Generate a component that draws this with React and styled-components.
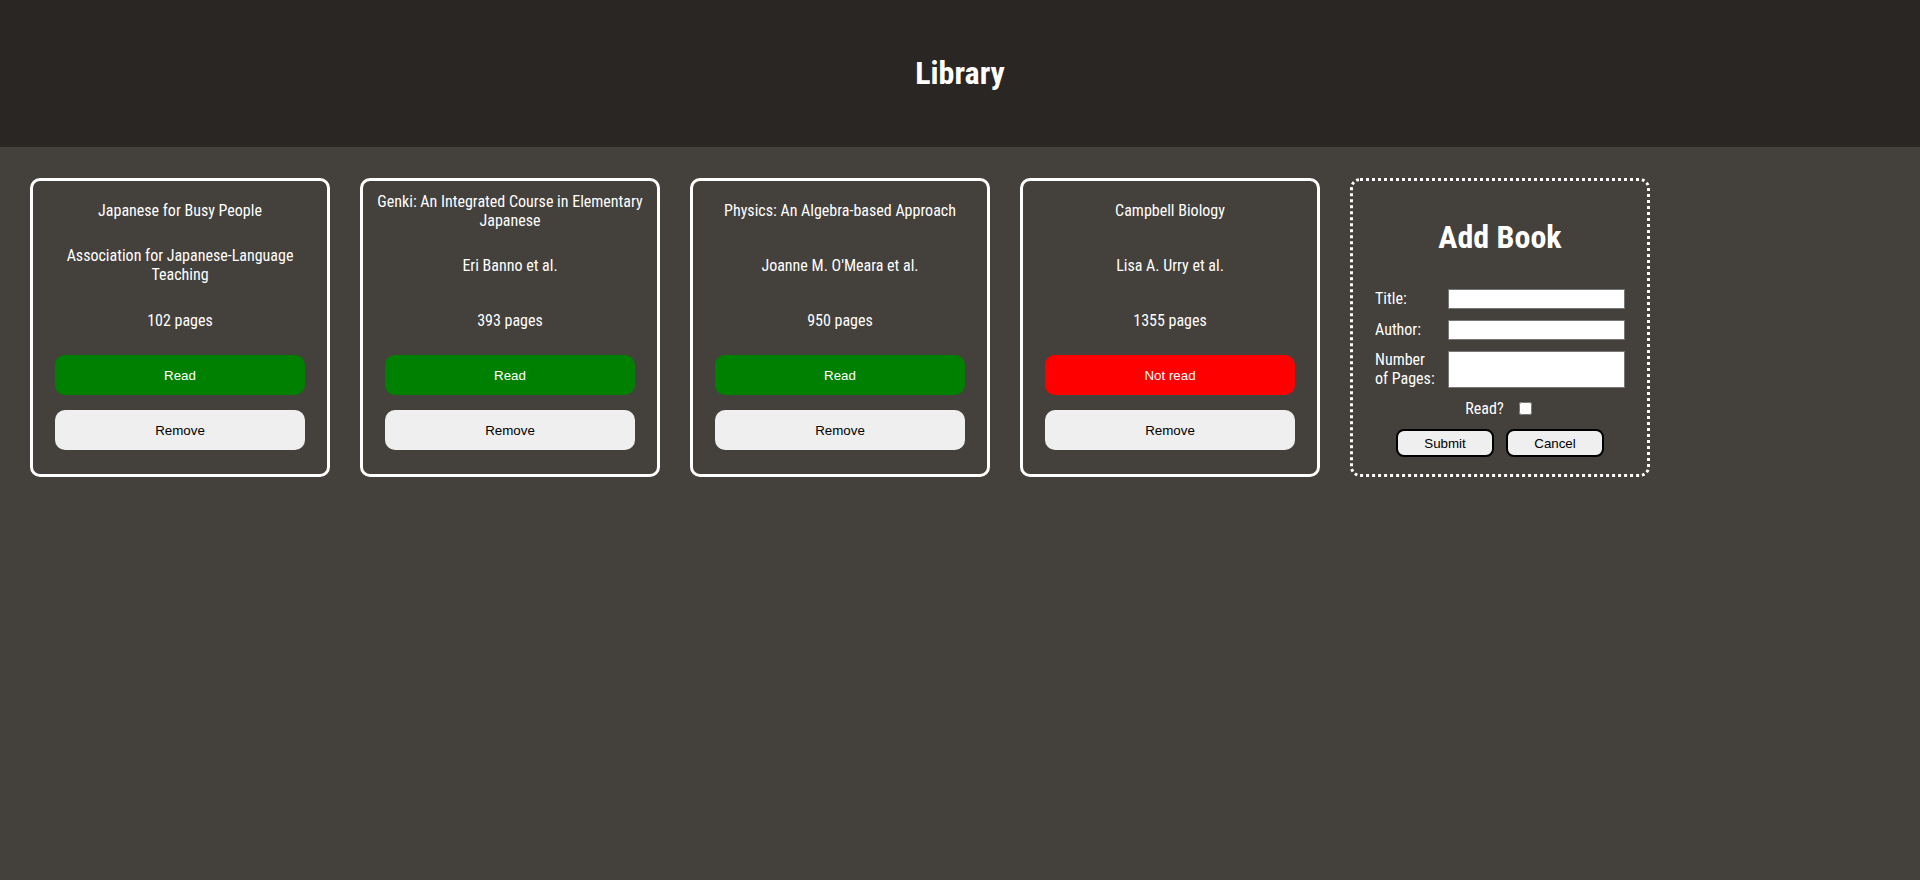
import React from "react";
import styled, { createGlobalStyle } from "styled-components";

const condensed = `"Roboto Condensed", "Liberation Sans Narrow", "Arial Narrow", Roboto, sans-serif`;
const buttonFont = `"Liberation Sans", Arial, sans-serif`;

const GlobalStyle = createGlobalStyle`
	* { box-sizing: border-box; }
	body {
		margin: 0;
		background: #44403b;
		color: #ffffff;
		font-family: ${condensed};
	}
	#root { min-height: 100vh; }
`;

const Header = styled.header`
	height: 147px;
	background: #2a2624;
	display: flex;
	align-items: center;
	justify-content: center;
`;

const Title = styled.h1`
	margin: 0;
	font-size: 32px;
	font-weight: 700;
	line-height: 37px;
`;

const Shelf = styled.main`
	display: flex;
	flex-wrap: wrap;
	align-items: flex-start;
	gap: 30px;
	padding: 31px 30px 30px;
`;

const Card = styled.div`
	width: 300px;
	height: 299px;
	border: 3px solid #ffffff;
	border-radius: 10px;
	padding: 10px 10px 24px;
	display: grid;
	grid-template-rows: repeat(3, 1fr) 40px 40px;
	row-gap: 15px;
	justify-items: center;
`;

const Field = styled.p`
	margin: 0;
	display: flex;
	align-items: center;
	justify-content: center;
	text-align: center;
	font-size: 16px;
	line-height: 19px;
`;

const tones = {
	read: { bg: "#008000", fg: "#ffffff" },
	unread: { bg: "#ff0000", fg: "#ffffff" },
	plain: { bg: "#efefef", fg: "#000000" },
};

const CardButton = styled.button`
	width: 250px;
	height: 40px;
	border: none;
	border-radius: 10px;
	background: ${(p) => tones[p.$tone].bg};
	color: ${(p) => tones[p.$tone].fg};
	font-family: ${buttonFont};
	font-size: 13.33px;
	cursor: pointer;
`;

const AddCard = styled.div`
	width: 300px;
	height: 299px;
	border: 3px dotted #ffffff;
	border-radius: 10px;
	padding: 38px 22px 16px;
	display: flex;
	flex-direction: column;
`;

const AddTitle = styled.h2`
	margin: 0 0 33px;
	text-align: center;
	font-size: 32px;
	font-weight: 700;
	line-height: 37px;
`;

const Form = styled.form`
	display: grid;
	grid-template-columns: 60px 1fr;
	column-gap: 13px;
	row-gap: 11px;
`;

const Label = styled.label`
	font-size: 16px;
	line-height: 18.5px;
	align-self: center;
`;

const TextInput = styled.input`
	width: 100%;
	height: ${(p) => (p.$tall ? "37px" : "20px")};
	border: 1px solid #767676;
	background: #ffffff;
	padding: 1px 2px;
`;

const CheckRow = styled.div`
	grid-column: 1 / -1;
	display: flex;
	align-items: center;
	justify-content: center;
	font-size: 16px;
	line-height: 19px;
`;

const CheckLabel = styled.label`
	margin-right: 11px;
`;

const Check = styled.input`
	width: 13px;
	height: 13px;
	margin: 3px 3px 3px 4px;
`;

const Actions = styled.div`
	grid-column: 1 / -1;
	display: flex;
	justify-content: center;
	gap: 12px;
`;

const FormButton = styled.button`
	width: 98px;
	height: 28px;
	border: 2px solid #000000;
	border-radius: 8px;
	background: #efefef;
	color: #000000;
	font-family: ${buttonFont};
	font-size: 13.33px;
	cursor: pointer;
`;

const books = [
	{ title: "Japanese for Busy People", author: "Association for Japanese-Language Teaching", pages: 102, read: true },
	{ title: "Genki: An Integrated Course in Elementary Japanese", author: "Eri Banno et al.", pages: 393, read: true },
	{ title: "Physics: An Algebra-based Approach", author: "Joanne M. O'Meara et al.", pages: 950, read: true },
	{ title: "Campbell Biology", author: "Lisa A. Urry et al.", pages: 1355, read: false },
];

export default function App() {
	const [library, setLibrary] = React.useState(books);

	const toggle = (i) =>
		setLibrary((state) => state.map((b, j) => (j === i ? { ...b, read: !b.read } : b)));
	const remove = (i) => setLibrary((state) => state.filter((_, j) => j !== i));

	return (
		<>
			<GlobalStyle />
			<Header>
				<Title>Library</Title>
			</Header>
			<Shelf>
				{library.map((book, i) => (
					<Card key={book.title}>
						<Field>{book.title}</Field>
						<Field>{book.author}</Field>
						<Field>{book.pages} pages</Field>
						<CardButton $tone={book.read ? "read" : "unread"} onClick={() => toggle(i)}>
							{book.read ? "Read" : "Not read"}
						</CardButton>
						<CardButton $tone="plain" onClick={() => remove(i)}>
							Remove
						</CardButton>
					</Card>
				))}
				<AddCard>
					<AddTitle>Add Book</AddTitle>
					<Form onSubmit={(e) => e.preventDefault()}>
						<Label htmlFor="title">Title:</Label>
						<TextInput id="title" type="text" />
						<Label htmlFor="author">Author:</Label>
						<TextInput id="author" type="text" />
						<Label htmlFor="pages">Number of Pages:</Label>
						<TextInput id="pages" type="number" $tall />
						<CheckRow>
							<CheckLabel htmlFor="read">Read?</CheckLabel>
							<Check id="read" type="checkbox" />
						</CheckRow>
						<Actions>
							<FormButton type="submit">Submit</FormButton>
							<FormButton type="button">Cancel</FormButton>
						</Actions>
					</Form>
				</AddCard>
			</Shelf>
		</>
	);
}
